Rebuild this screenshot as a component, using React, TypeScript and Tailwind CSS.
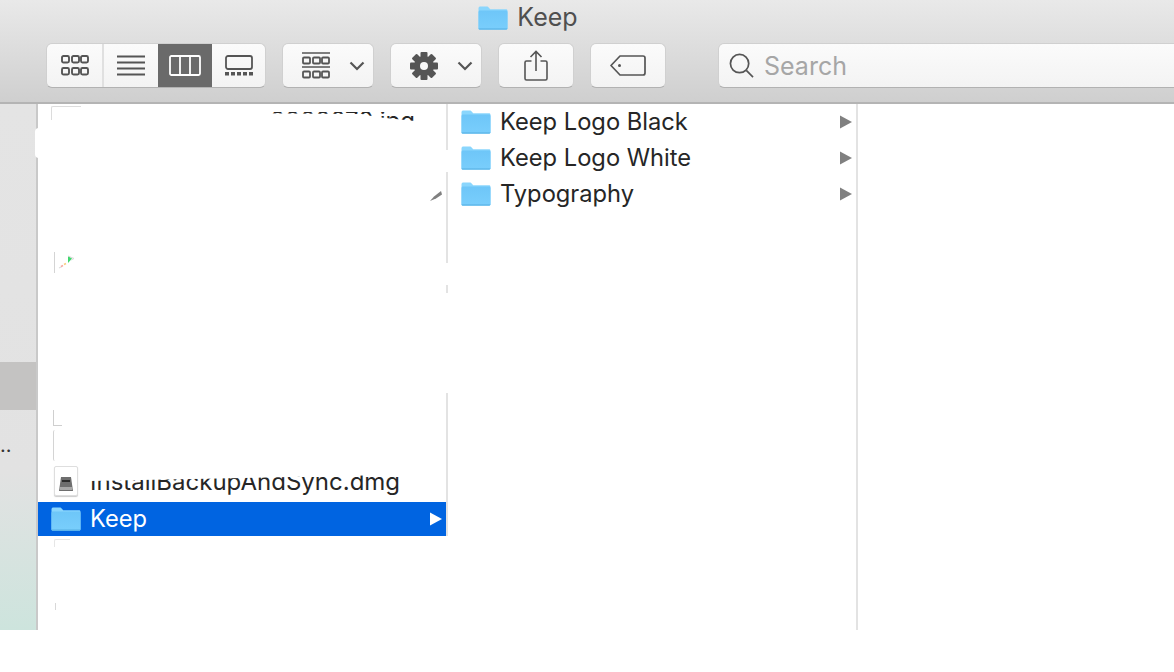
function FolderIcon({ className, id }: { className?: string; id: string }) {
  return (
    <svg viewBox="0 0 30 24" className={className}>
      <defs>
        <linearGradient id={id} x1="0" y1="0" x2="0" y2="1">
          <stop offset="0" stopColor="#6ec6f8" />
          <stop offset="1" stopColor="#79cefc" />
        </linearGradient>
      </defs>
      <path d="M0.500 2.500C0.500 1 1.300 0.500 2.500 0.500h6.200c1 0 1.500.4 2.200 1.200L12.200 3.300H28c1 0 1.500.6 1.500 1.500V22c0 1-.6 1.500-1.500 1.500H2C1 23.500.5 23 .5 22z" fill="#8ad6fd" />
      <path d="M0.500 6c0-.9.6-1.500 1.500-1.500h26c.9 0 1.500.6 1.500 1.500V22c0 1-.6 1.500-1.500 1.500H2C1 23.500.5 23 .5 22z" fill={`url(#${id})`} />
      <path d="M0.500 22.400h29c-.2.7-.7 1.100-1.500 1.100H2c-.9 0-1.300-.3-1.500-1.100z" fill="#55aee2" />
    </svg>
  );
}

function Arrow({ white }: { white?: boolean }) {
  return (
    <svg viewBox="0 0 12 14" className="w-3 h-3.5 shrink-0">
      <path d="M0 0.500L12 7L0 13.500z" fill={white ? '#ffffff' : '#808080'} />
    </svg>
  );
}

function Chevron() {
  return (
    <svg viewBox="0 0 16 10" className="w-4 h-2.5" fill="none" stroke="#555" strokeWidth="2.200">
      <path d="M1.500 1.500L8 8l6.500-6.500" />
    </svg>
  );
}

function IconGrid() {
  return (
    <svg viewBox="0 0 28 21" className="w-7 h-[21px]" fill="none" stroke="#555" strokeWidth="1.900">
      {[1, 11, 20].map((x) => (
        <g key={x}>
          <rect x={x} y="1" width="7" height="6.500" rx="1.500" />
          <rect x={x} y="13" width="7" height="6.500" rx="1.500" />
        </g>
      ))}
    </svg>
  );
}

function IconList() {
  return (
    <svg viewBox="0 0 28 21" className="w-7 h-[21px]" stroke="#555" strokeWidth="1.800">
      <path d="M0 1.500h28M0 7.500h28M0 13.500h28M0 19.500h28" />
    </svg>
  );
}

function IconColumns() {
  return (
    <svg viewBox="0 0 32 21" className="w-8 h-[21px]" fill="none" stroke="#fff" strokeWidth="1.800">
      <rect x="1" y="1" width="30" height="19" rx="1.500" />
      <path d="M11 1v19M21 1v19" />
    </svg>
  );
}

function IconGallery() {
  return (
    <svg viewBox="0 0 28 21" className="w-7 h-[21px]">
      <rect x="1" y="1" width="26" height="13" rx="2" fill="none" stroke="#555" strokeWidth="1.800" />
      {[0, 6, 12, 18, 24].map((x) => (
        <rect key={x} x={x} y="17" width="4" height="3.500" fill="#555" />
      ))}
    </svg>
  );
}

function IconArrange() {
  return (
    <svg viewBox="0 0 28 27" className="w-7 h-[27px]">
      <path d="M0 1h28M0 15h28" stroke="#555" strokeWidth="1.600" />
      {[1, 11, 20].map((x) => (
        <g key={x} fill="none" stroke="#555" strokeWidth="1.800">
          <rect x={x} y="5.500" width="7" height="6" rx="1" />
          <rect x={x} y="19.500" width="7" height="6" rx="1" />
        </g>
      ))}
    </svg>
  );
}

function IconGear() {
  return (
    <svg viewBox="0 0 28 28" className="w-7 h-7" fill="#555">
      {[0, 45, 90, 135].map((a) => (
        <rect key={a} x="10.500" y="0" width="7" height="28" rx="1" transform={`rotate(${a} 14 14)`} />
      ))}
      <circle cx="14" cy="14" r="10" />
      <circle cx="14" cy="14" r="4" fill="#f7f7f7" />
    </svg>
  );
}

function IconShare() {
  return (
    <svg viewBox="0 0 24 31" className="w-6 h-[31px]" fill="none" stroke="#555" strokeWidth="1.600">
      <path d="M7.500 11H2.500C1.500 11 1 11.500 1 12.500V28.500C1 29.500 1.500 30 2.500 30H21.500C22.500 30 23 29.500 23 28.500V12.500C23 11.500 22.500 11 21.500 11H16.500" />
      <path d="M12 21V1.500M6.500 7L12 1.500L17.500 7" />
    </svg>
  );
}

function IconTag() {
  return (
    <svg viewBox="0 0 36 21" className="w-9 h-[21px]" fill="none" stroke="#555" strokeWidth="1.700">
      <path d="M10 1H33C34.200 1 35 1.800 35 3V18C35 19.200 34.200 20 33 20H10L1 10.500z" strokeLinejoin="round" />
      <circle cx="9.500" cy="10.500" r="1.500" fill="#555" stroke="none" />
    </svg>
  );
}

function ToolButton({ className, children }: { className: string; children: React.ReactNode }) {
  return (
    <div className={`h-[45px] shrink-0 flex items-center rounded-[6px] bg-[linear-gradient(#fbfbfb,#f3f3f3)] border border-[#d0d0d0] border-b-[#b2b2b2] ${className}`}>
      {children}
    </div>
  );
}

function BlankRow({ children }: { children?: React.ReactNode }) {
  return <div className="h-9 shrink-0 relative">{children}</div>;
}

function SubFolder({ name, id }: { name: string; id: string }) {
  return (
    <div className="h-9 flex items-center pl-[13px] pr-[4px]">
      <FolderIcon id={id} className="w-[30px] h-[24px] shrink-0" />
      <span className="ml-[9px] flex-1 text-[23.7px] text-[#262626]">{name}</span>
      <Arrow />
    </div>
  );
}

export default function App() {
  return (
    <div className="w-[1174px] h-[672px] flex flex-col bg-white overflow-hidden font-['Inter','Liberation_Sans',sans-serif]">
      {/* Titlebar + toolbar */}
      <header className="h-[104px] shrink-0 bg-[linear-gradient(#e9e9e9,#cfcfcf)] border-b-2 border-[#b4b4b4] flex flex-col">
        <div className="h-[35px] pr-[118px] flex items-center justify-center gap-[9px]">
          <FolderIcon id="titleFolder" className="w-[30px] h-[24px]" />
          <span className="text-[25px] text-[#4f4f4f]">Keep</span>
        </div>
        <div className="flex items-center pl-[46px] pt-[8px]">
          <ToolButton className="w-[220px] overflow-hidden">
            <div className="w-[57px] h-full flex items-center justify-center border-r-2 border-[#e0e0e0]"><IconGrid /></div>
            <div className="w-[54px] h-full flex items-center justify-center"><IconList /></div>
            <div className="w-[54px] h-full flex items-center justify-center bg-[#6a6a6a]"><IconColumns /></div>
            <div className="flex-1 h-full flex items-center justify-center"><IconGallery /></div>
          </ToolButton>
          <ToolButton className="w-[92px] ml-[16px] pl-[19px] gap-[19px]">
            <IconArrange />
            <Chevron />
          </ToolButton>
          <ToolButton className="w-[92px] ml-[16px] pl-[19px] gap-[19px]">
            <IconGear />
            <Chevron />
          </ToolButton>
          <ToolButton className="w-[76px] ml-[16px] justify-center">
            <IconShare />
          </ToolButton>
          <ToolButton className="w-[76px] ml-[16px] justify-center">
            <IconTag />
          </ToolButton>
          <ToolButton className="w-[480px] ml-[52px] pl-[10px] gap-[10px]">
            <svg viewBox="0 0 26 26" className="w-[25px] h-[25px]" fill="none" stroke="#555" strokeWidth="1.800">
              <circle cx="11" cy="11" r="9.500" />
              <path d="M18 18l7 7" />
            </svg>
            <span className="text-[25px] text-[#a6a6a6] pt-[3px]">Search</span>
          </ToolButton>
        </div>
      </header>

      {/* Browser */}
      <main className="h-[526px] shrink-0 flex">
        <aside className="w-[38px] shrink-0 flex flex-col border-r-2 border-[#c9c9c9] bg-[linear-gradient(#e4e4e4_0%,#e2e2e2_70%,#cde4dd_100%)]">
          <div className="h-[258px] shrink-0" />
          <div className="h-[48px] shrink-0 bg-[#c4c3c2]" />
          <div className="mt-[23px] text-[20px] leading-[24px] text-[#333] overflow-hidden">..</div>
        </aside>

        <section className="w-[410px] shrink-0 relative">
          {/* parts of this column were painted out in the screenshot */}
          <div className="absolute -left-[3px] top-[24px] w-[8px] h-[30px] rounded-full bg-white" />
          <div className="absolute right-0 top-[46px] w-[2px] h-[22px] bg-white z-10" />
          <div className="absolute right-0 top-[159px] w-[2px] h-[22px] bg-white z-10" />
          <div className="absolute right-0 top-[189px] w-[2px] h-[100px] bg-white z-10" />

          <div className="h-[432px] pt-[2px] flex flex-col border-r-2 border-[#e3e3e3]">
            <BlankRow>
              <div className="absolute left-[200px] right-[31px] top-[3px] h-[14px] overflow-hidden text-right text-[24px] leading-[24px] text-[#262626] [clip-path:polygon(0_3px,100%_3px,100%_12px,78%_8px,70%_5px,0_4px)]">0000070.jpg</div>
              <div className="absolute left-[13px] top-[0px] w-[30px] h-[14px] border-l border-t border-[#dcdcdc] rounded-tl-[2px]" />
            </BlankRow>
            <BlankRow />
            <BlankRow>
              <svg viewBox="0 0 12 10" className="absolute right-[4px] top-[13px] w-3 h-[10px]">
                <path d="M0 10L4 5.500 11 0l1 3.500-6 4z" fill="#808080" />
              </svg>
            </BlankRow>
            <BlankRow />
            <BlankRow>
              <svg viewBox="0 0 24 22" className="absolute left-[16px] top-[2px] w-6 h-[22px]" fill="none">
                <path d="M.5 0v21" stroke="#d4d4d4" />
                <path d="M5 16l3-1.500" stroke="#dddddd" strokeWidth="1.200" />
                <path d="M7 14.500l2-1" stroke="#f7a9a0" strokeWidth="1.500" />
                <path d="M10 12.500l2-1" stroke="#f8cf80" strokeWidth="1.800" />
                <path d="M14 11V4l4 2.500z" fill="#3ed86c" />
                <path d="M14 4l6 2.500-3 1.500" stroke="#d8d8d8" />
              </svg>
            </BlankRow>
            <BlankRow />
            <BlankRow />
            <BlankRow />
            <BlankRow>
              <div className="absolute left-[15px] top-[16px] w-[9px] h-[16px] border-l border-b border-[#cfcfcf]" />
            </BlankRow>
            <BlankRow>
              <div className="absolute left-[15px] top-[0px] w-[4px] h-[31px] border-l border-[#d4d4d4] rounded-l-[2px]" />
            </BlankRow>
            <BlankRow>
              <div className="absolute left-[16px] top-0 w-[24px] h-[30px] bg-white border border-[#dedede] rounded-[2px] flex items-end justify-center pb-[4px] shadow-[0_1px_1px_#cccccc]">
                <svg viewBox="0 0 14 14" className="w-3.5 h-3.5">
                  <path d="M2 0h10l2 14H0z" fill="#6e6e6e" />
                  <path d="M3 3h8v2H3z" fill="#2c2c2c" />
                  <path d="M1 10h12v3H1z" fill="#a8a8a8" />
                </svg>
              </div>
              <div className="absolute left-[52px] right-[8px] top-[1px] h-[30px] overflow-hidden [clip-path:polygon(0_14px,100%_7px,100%_100%,0_100%)]">
                <div className="text-[24px] leading-[29px] text-[#262626] whitespace-nowrap">InstallBackupAndSync.dmg</div>
              </div>
            </BlankRow>
            <div className="h-[34px] flex items-center bg-[#0064e1] pl-[13px] pr-[4px]">
              <FolderIcon id="keepFolder" className="w-[30px] h-[24px] shrink-0" />
              <span className="ml-[9px] flex-1 text-[23.7px] text-white">Keep</span>
              <Arrow white />
            </div>
          </div>
          <BlankRow>
            <div className="absolute left-[16px] top-[3px] w-[16px] h-[8px] border-l border-t border-[#e6e6e6] rounded-tl-[2px]" />
          </BlankRow>
          <BlankRow>
            <div className="absolute left-[17px] top-[31px] w-[6px] h-[7px] border-l border-[#d8d8d8]" />
          </BlankRow>
        </section>

        <section className="w-[410px] shrink-0 border-r-2 border-[#e3e3e3]">
          <SubFolder id="logoBlack" name="Keep Logo Black" />
          <SubFolder id="logoWhite" name="Keep Logo White" />
          <SubFolder id="typography" name="Typography" />
        </section>

        <section className="flex-1" />
      </main>
    </div>
  );
}
